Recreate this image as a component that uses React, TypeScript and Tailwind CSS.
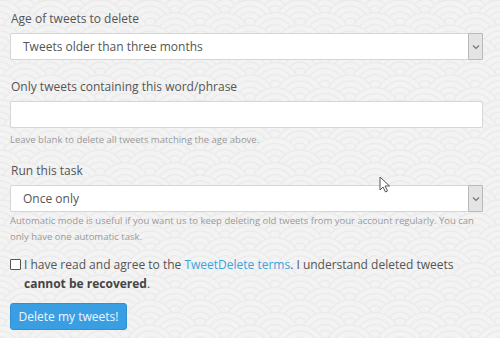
import React from "react";

function Scales() {
  const R = 25;
  const rows: JSX.Element[] = [];
  let i = 0;
  for (let y = -12.5; y <= 338 + 30; y += 12.5) {
    const off = i % 2 === 0 ? 0 : R;
    for (let x = -R + off; x <= 500 + R; x += 2 * R) {
      rows.push(
        <g key={`${i}-${x}`}>
          <circle cx={x} cy={y} r={R} fill="#f3f3f3" stroke="#ebebeb" strokeWidth={1.5} />
          <circle cx={x} cy={y} r={R - 6} fill="none" stroke="#ebebeb" strokeWidth={1.5} />
          <circle cx={x} cy={y} r={R - 12} fill="none" stroke="#ebebeb" strokeWidth={1.5} />
          <circle cx={x} cy={y} r={R - 18} fill="none" stroke="#ebebeb" strokeWidth={1.5} />
        </g>
      );
    }
    i++;
  }
  return (
    <svg className="absolute inset-0 w-full h-full" width={500} height={338}>
      <rect width="500" height="338" fill="#f3f3f3" />
      {rows}
    </svg>
  );
}

function Chevron() {
  return (
    <svg width="8" height="6" viewBox="0 0 8 6">
      <path d="M1 1.5 L4 4.5 L7 1.5" fill="none" stroke="#777" strokeWidth="1.2" />
    </svg>
  );
}

function Select({ value }: { value: string }) {
  return (
    <div className="flex h-[27px] w-[473px] bg-white border border-[#d6d6d6] rounded-[2px]">
      <div className="flex-1 flex items-center pl-[12px] text-[12px] text-[#555]">{value}</div>
      <div className="w-[13px] h-full -mr-px -my-px box-content border border-[#b9b9b9] bg-[#e4e4e4] flex items-center justify-center rounded-[1px]">
        <Chevron />
      </div>
    </div>
  );
}

export default function App() {
  return (
    <div
      className="relative w-[500px] h-[338px] overflow-hidden"
      style={{ fontFamily: '"Open Sans", "Noto Sans", sans-serif' }}
    >
      <Scales />
      <div className="relative flex flex-col pl-[10px] pt-[10px]">
        <div className="text-[12px] leading-[18px] text-[#555] pl-px">Age of tweets to delete</div>
        <div className="mt-[5px]">
          <Select value="Tweets older than three months" />
        </div>
        <div className="mt-[18px] text-[12px] leading-[18px] text-[#555] pl-px">
          Only tweets containing this word/phrase
        </div>
        <div className="mt-[5px] h-[27px] w-[473px] bg-white border border-[#d6d6d6] rounded-[2px]" />
        <div className="mt-[4px] text-[9.5px] leading-[15px] text-[#999]">
          Leave blank to delete all tweets matching the age above.
        </div>
        <div className="mt-[15px] text-[12px] leading-[18px] text-[#555] pl-px">Run this task</div>
        <div className="mt-[5px]">
          <Select value="Once only" />
        </div>
        <div className="mt-[1px] w-[475px] text-[9.5px] leading-[16px] text-[#999]">
          Automatic mode is useful if you want us to keep deleting old tweets from your account regularly. You can
          only have one automatic task.
        </div>
        <div className="mt-[10px] flex w-[465px] text-[12px] leading-[19px] text-[#555]">
          <div className="pt-[4px] pr-[3px]">
            <div className="w-[11px] h-[11px] border border-[#555] bg-white rounded-[1px]" />
          </div>
          <div>
            I have read and agree to the <span className="text-[#3aa4dc]">TweetDelete terms</span>. I understand deleted
            tweets <span className="font-bold text-[#444]">cannot be recovered</span>.
          </div>
        </div>
        <div className="mt-[10px]">
          <button className="w-[117px] h-[27px] rounded-[3px] bg-[#3a9fe2] border border-[#2f8fd3] text-[#eef6fc] text-[12px] flex items-center justify-center">
            Delete my tweets!
          </button>
        </div>
      </div>
      <svg className="absolute left-[379px] top-[176px]" width="12" height="17" viewBox="0 0 12 17">
        <path d="M1 1 L1 14 L4 11 L6.5 16 L8.5 15 L6 10 L10.5 10 Z" fill="#fff" stroke="#555" strokeWidth="1" strokeLinejoin="round" />
      </svg>
    </div>
  );
}
